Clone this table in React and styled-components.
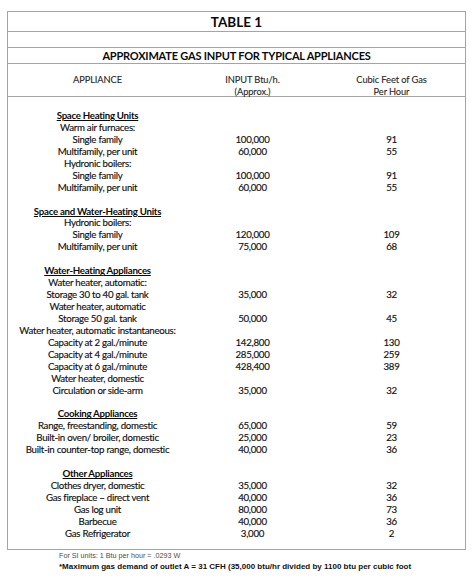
import React from 'react';
import styled, { createGlobalStyle } from 'styled-components';

const GlobalStyle = createGlobalStyle`
  html, body { margin: 0; padding: 0; background: #ffffff; }
  body { font-family: Lato, "Open Sans", sans-serif; color: #1a1a1a; }
`;

const Page = styled.div`
  width: 474px;
  height: 581px;
  box-sizing: border-box;
  padding: 11px 8px 0 7px;
  overflow: hidden;
`;

const Table = styled.div`
  width: 459px;
  box-sizing: border-box;
  border: 1px solid #a4a4a4;
  display: flex;
  flex-direction: column;
`;

const BandRow = styled.div`
  height: ${p => p.$h}px;
  border-bottom: 1px solid #a4a4a4;
  display: flex;
  align-items: center;
  justify-content: center;
  font-weight: 700;
  font-size: ${p => p.$size}px;
  color: #0a0a0a;
  letter-spacing: ${p => p.$ls || 0}px;
`;

const HeaderRow = styled.div`
  height: 33px;
  box-sizing: border-box;
  border-bottom: 1px solid #a4a4a4;
  display: grid;
  grid-template-columns: 179px 131px 1fr;
  padding-top: 10px;
  font-size: 9.3px;
  letter-spacing: -0.1px;
  line-height: 11.5px;
  color: #262626;
  -webkit-text-stroke: 0.1px #262626;
`;

const HeadCell = styled.div`
  text-align: center;
`;

const Body = styled.div`
  padding: 12px 0 10px;
  display: flex;
  flex-direction: column;
`;

const Row = styled.div`
  display: grid;
  grid-template-columns: 179px 131px 1fr;
  height: 11.95px;
  line-height: 12px;
  font-size: 9.7px;
  letter-spacing: -0.28px;
  color: #111;
  -webkit-text-stroke: 0.15px #111;
`;

const Cell = styled.div`
  text-align: center;
  white-space: nowrap;
`;

const Heading = styled(Cell)`
  font-weight: 700;
  text-decoration: underline;
  text-underline-offset: 1px;
  color: #0a0a0a;
  -webkit-text-stroke: 0;
`;

const Notes = styled.div`
  padding-left: 52px;
  font-family: "Liberation Sans", Arial, sans-serif;
  line-height: 11px;
`;

const NoteSmall = styled.div`
  font-size: 7.2px;
  color: #4d4d4d;
`;

const NoteBold = styled.div`
  font-size: 8px;
  font-weight: 700;
  color: #111;
`;

const rows = [
  ['h', 'Space Heating Units'],
  ['r', 'Warm air furnaces:'],
  ['r', 'Single family', '100,000', '91'],
  ['r', 'Multifamily, per unit', '60,000', '55'],
  ['r', 'Hydronic boilers:'],
  ['r', 'Single family', '100,000', '91'],
  ['r', 'Multifamily, per unit', '60,000', '55'],
  ['r', ''],
  ['h', 'Space and Water-Heating Units'],
  ['r', 'Hydronic boilers:'],
  ['r', 'Single family', '120,000', '109'],
  ['r', 'Multifamily, per unit', '75,000', '68'],
  ['r', ''],
  ['h', 'Water-Heating Appliances'],
  ['r', 'Water heater, automatic:'],
  ['r', 'Storage 30 to 40 gal. tank', '35,000', '32'],
  ['r', 'Water heater, automatic'],
  ['r', 'Storage 50 gal. tank', '50,000', '45'],
  ['r', 'Water heater, automatic instantaneous:'],
  ['r', 'Capacity at 2 gal./minute', '142,800', '130'],
  ['r', 'Capacity at 4 gal./minute', '285,000', '259'],
  ['r', 'Capacity at 6 gal./minute', '428,400', '389'],
  ['r', 'Water heater, domestic'],
  ['r', 'Circulation or side-arm', '35,000', '32'],
  ['r', ''],
  ['h', 'Cooking Appliances'],
  ['r', 'Range, freestanding, domestic', '65,000', '59'],
  ['r', 'Built-in oven/ broiler, domestic', '25,000', '23'],
  ['r', 'Built-in counter-top range, domestic', '40,000', '36'],
  ['r', ''],
  ['h', 'Other Appliances'],
  ['r', 'Clothes dryer, domestic', '35,000', '32'],
  ['r', 'Gas fireplace \u2013 direct vent', '40,000', '36'],
  ['r', 'Gas log unit', '80,000', '73'],
  ['r', 'Barbecue', '40,000', '36'],
  ['r', 'Gas Refrigerator', '3,000', '2'],
];

export default function App() {
  return (
    <>
      <GlobalStyle />
      <Page>
        <Table>
          <BandRow $h={19} $size={13.5}>TABLE 1</BandRow>
          <BandRow $h={15} />
          <BandRow $h={15} $size={11} $ls={-0.2}>APPROXIMATE GAS INPUT FOR TYPICAL APPLIANCES</BandRow>
          <HeaderRow>
            <HeadCell>APPLIANCE</HeadCell>
            <HeadCell>INPUT Btu/h.<br />(Approx.)</HeadCell>
            <HeadCell>Cubic Feet of Gas<br />Per Hour</HeadCell>
          </HeaderRow>
          <Body>
            {rows.map(([t, a, b, c], i) => (
              <Row key={i}>
                {t === 'h' ? <Heading>{a}</Heading> : <Cell>{a}</Cell>}
                <Cell>{b}</Cell>
                <Cell>{c}</Cell>
              </Row>
            ))}
          </Body>
        </Table>
        <Notes>
          <NoteSmall>For SI units: 1 Btu per hour = .0293 W</NoteSmall>
          <NoteBold>*Maximum gas demand of outlet A = 31 CFH (35,000 btu/hr divided by 1100 btu per cubic foot</NoteBold>
        </Notes>
      </Page>
    </>
  );
}
